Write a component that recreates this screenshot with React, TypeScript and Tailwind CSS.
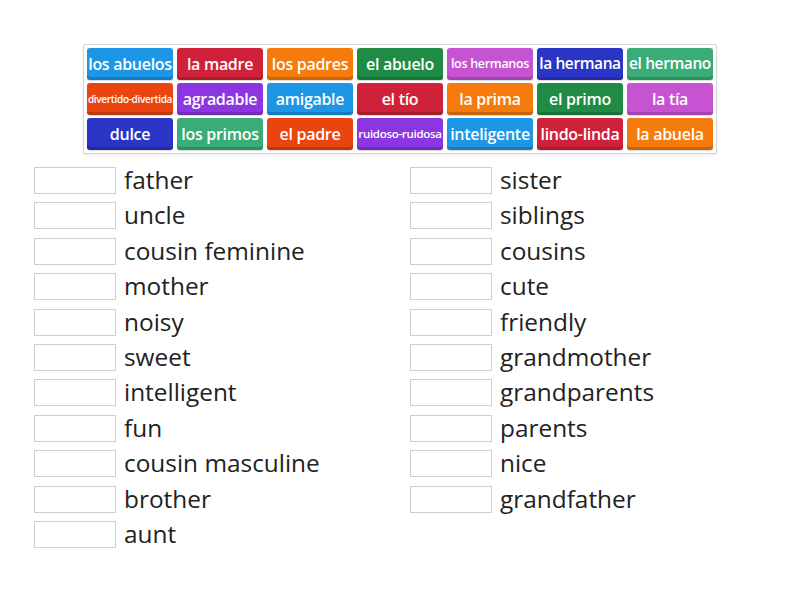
type Tile = { text: string; color: string; size?: string };

const tiles: Tile[] = [
  { text: "los abuelos", color: "bg-[#1e96e6]" },
  { text: "la madre", color: "bg-[#d0213a]" },
  { text: "los padres", color: "bg-[#f47b0c]" },
  { text: "el abuelo", color: "bg-[#1f8b45]" },
  { text: "los hermanos", color: "bg-[#c653d2]", size: "text-[12.5px] tracking-[-0.3px]" },
  { text: "la hermana", color: "bg-[#2a35c6]", size: "text-[15.5px] tracking-[-0.4px]" },
  { text: "el hermano", color: "bg-[#3aac78]", size: "text-[15.5px] tracking-[-0.4px]" },
  { text: "divertido-divertida", color: "bg-[#ea4410]", size: "text-[10px] tracking-[-0.3px]" },
  { text: "agradable", color: "bg-[#8b36e0]" },
  { text: "amigable", color: "bg-[#1e96e6]" },
  { text: "el tío", color: "bg-[#d0213a]" },
  { text: "la prima", color: "bg-[#f47b0c]" },
  { text: "el primo", color: "bg-[#1f8b45]" },
  { text: "la tía", color: "bg-[#c653d2]" },
  { text: "dulce", color: "bg-[#2a35c6]" },
  { text: "los primos", color: "bg-[#3aac78]" },
  { text: "el padre", color: "bg-[#ea4410]" },
  { text: "ruidoso-ruidosa", color: "bg-[#8b36e0]", size: "text-[11.5px] tracking-[-0.3px]" },
  { text: "inteligente", color: "bg-[#1e96e6]" },
  { text: "lindo-linda", color: "bg-[#d0213a]" },
  { text: "la abuela", color: "bg-[#f47b0c]" },
];

const leftWords = [
  "father",
  "uncle",
  "cousin feminine",
  "mother",
  "noisy",
  "sweet",
  "intelligent",
  "fun",
  "cousin masculine",
  "brother",
  "aunt",
];

const rightWords = [
  "sister",
  "siblings",
  "cousins",
  "cute",
  "friendly",
  "grandmother",
  "grandparents",
  "parents",
  "nice",
  "grandfather",
];

function WordColumn({ words }: { words: string[] }) {
  return (
    <div className="flex w-[376px] flex-col gap-[8.4px]">
      {words.map((w) => (
        <div key={w} className="flex h-[27px] items-center">
          <div className="h-[27px] w-[82px] shrink-0 border border-[#cfcfcf] bg-white" />
          <span className="mb-[2px] ml-[8px] whitespace-nowrap text-[24.4px] leading-[27px] text-[#222]">{w}</span>
        </div>
      ))}
    </div>
  );
}

export default function App() {
  return (
    <div className="min-h-[600px] w-[800px] bg-white font-['Open_Sans',sans-serif]">
      <div className="flex justify-center pt-[44px]">
        <div className="grid grid-cols-[repeat(7,86px)] gap-x-[4px] gap-y-[3px] rounded-[2px] border border-[#d6d6d6] p-[3px] shadow-[0_1px_2px_rgba(0,0,0,0.08)]">
          {tiles.map((t) => (
            <div
              key={t.text}
              className={`flex h-[32px] items-center justify-center overflow-hidden whitespace-nowrap rounded-[3px] font-semibold text-white shadow-[inset_0_-3px_0_rgba(0,0,0,0.18),0_1px_1px_rgba(0,0,0,0.15)] ${t.color} ${
                t.size ?? "text-[16px] tracking-[-0.3px]"
              }`}
            >
              {t.text}
            </div>
          ))}
        </div>
      </div>

      <div className="mt-[13px] flex pl-[34px]">
        <WordColumn words={leftWords} />
        <WordColumn words={rightWords} />
      </div>
    </div>
  );
}
